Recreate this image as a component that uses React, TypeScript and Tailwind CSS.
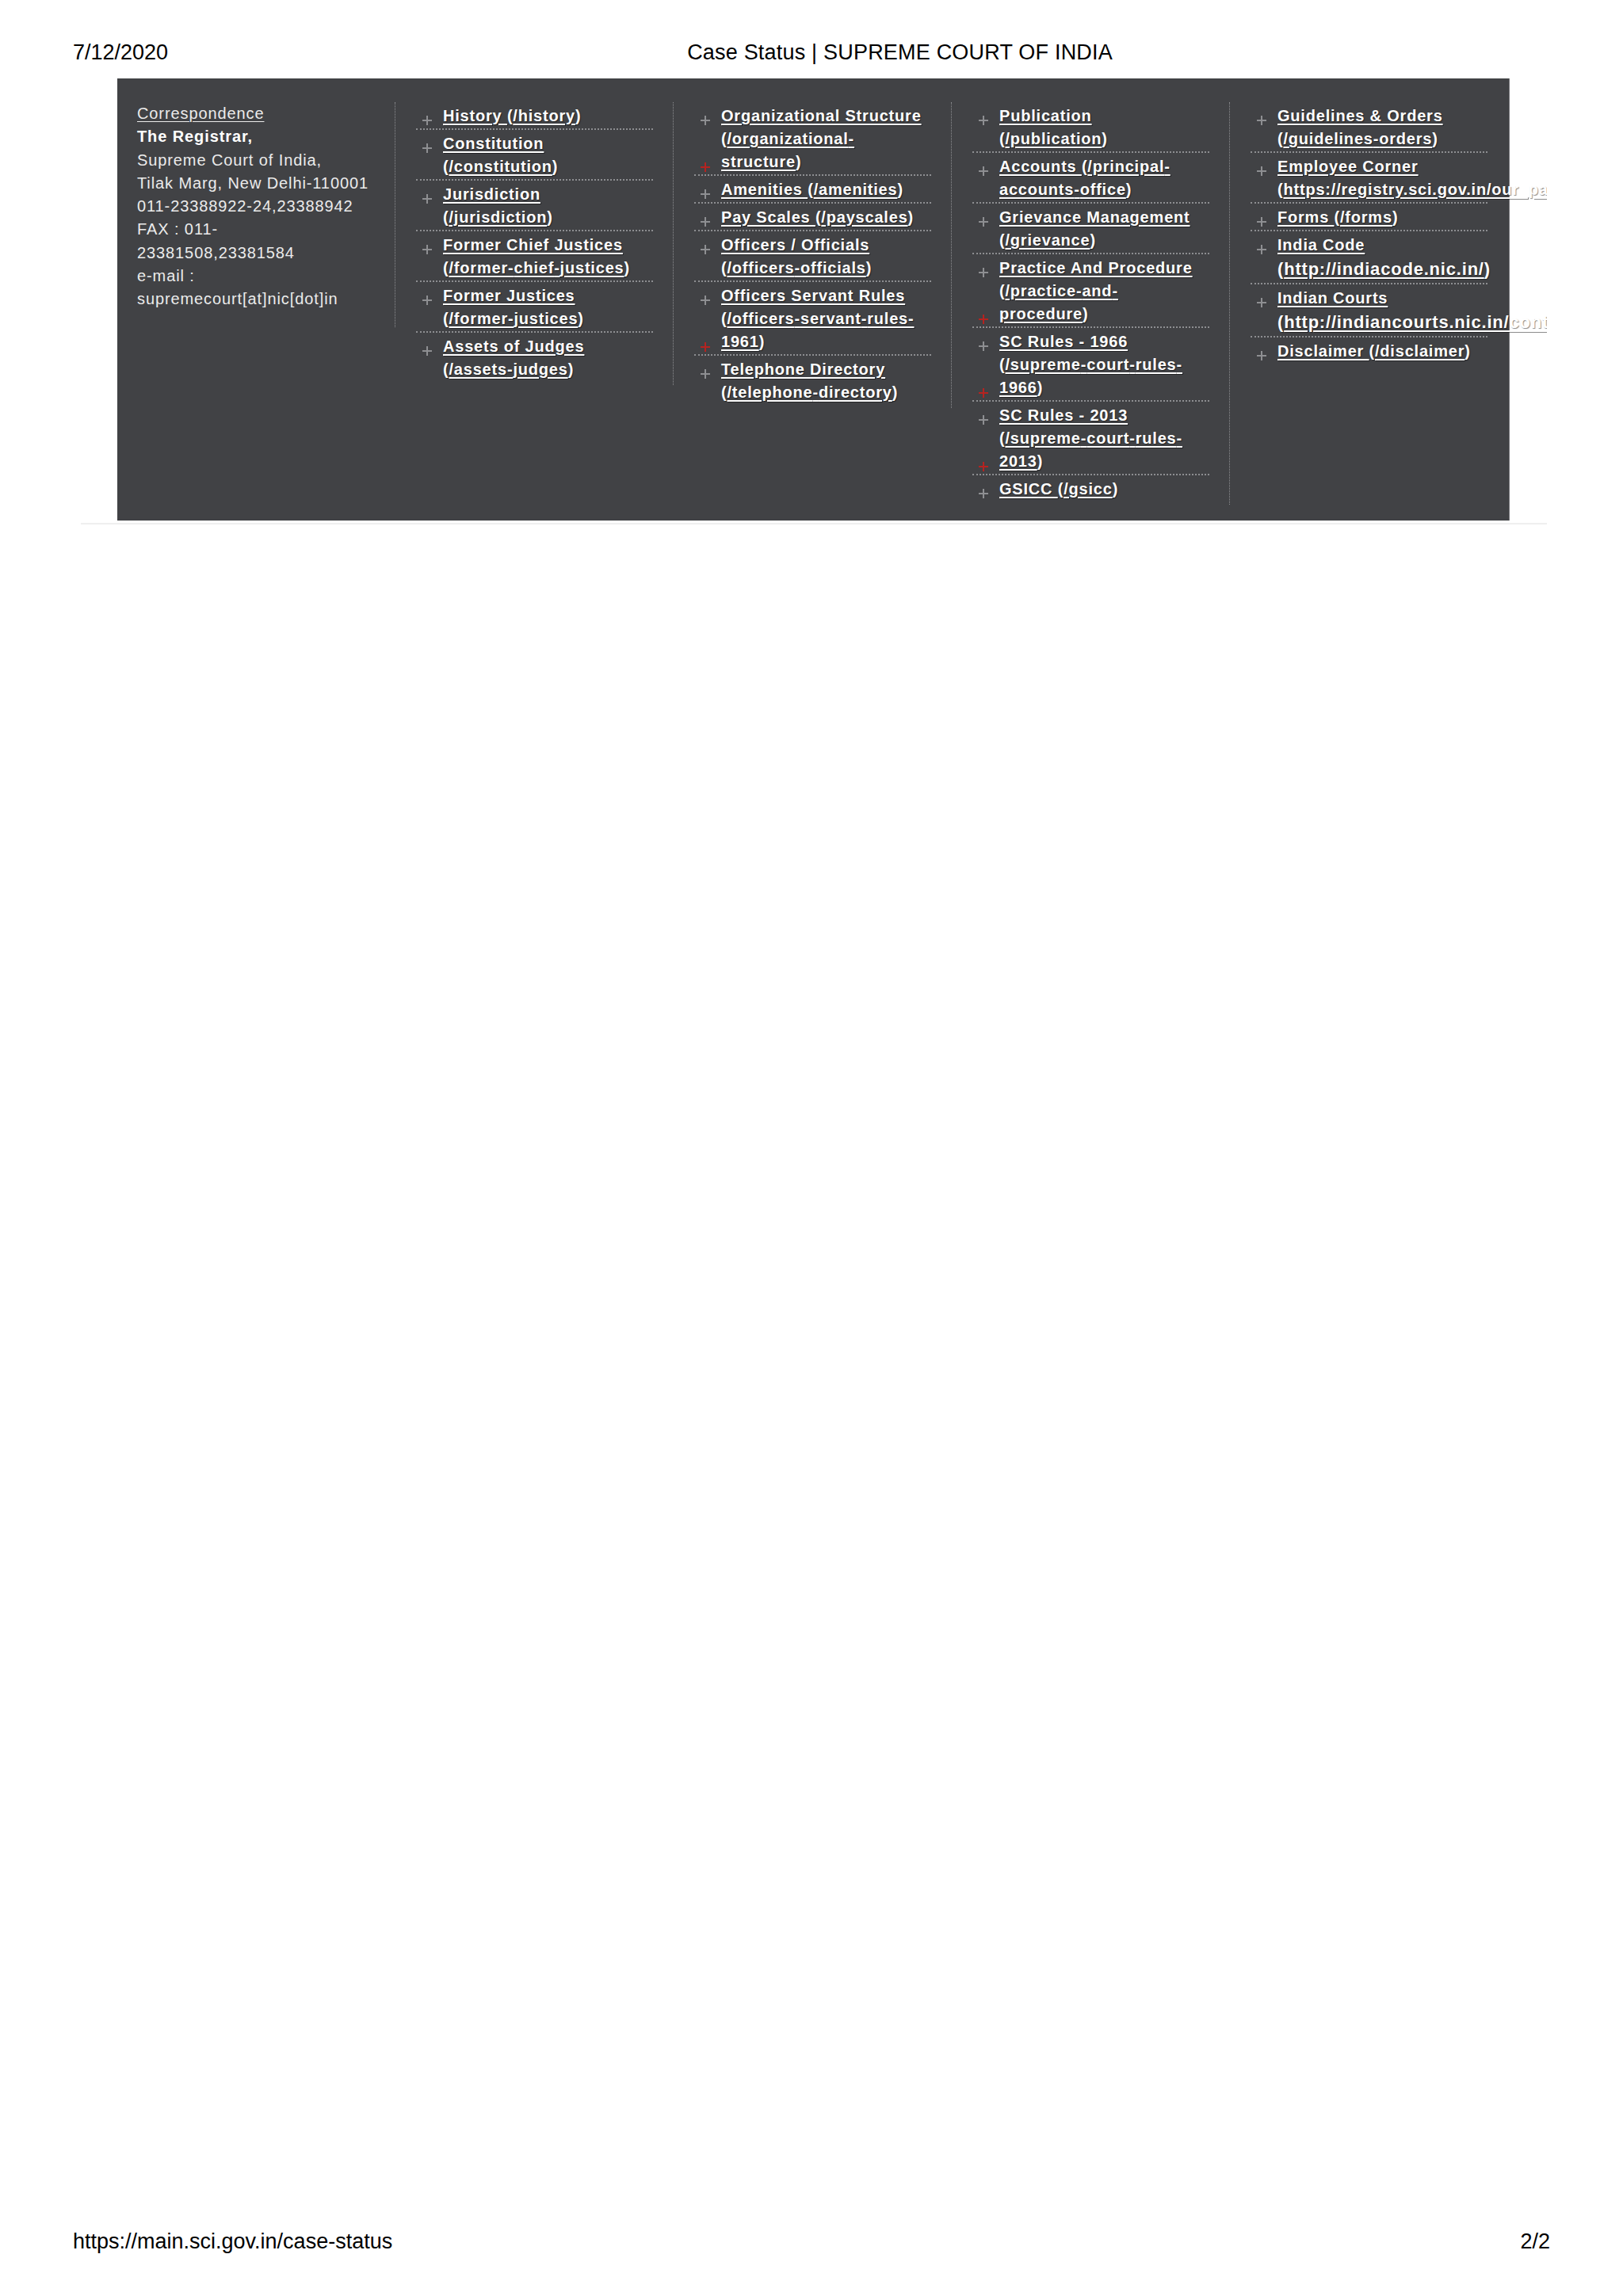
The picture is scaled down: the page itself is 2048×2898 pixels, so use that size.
import React from "react";

type Item = { label: string; href: string; red?: boolean; big?: boolean; nowrap?: boolean };

const col2: Item[] = [
  { label: "History", href: "/history" },
  { label: "Constitution", href: "/constitution" },
  { label: "Jurisdiction", href: "/jurisdiction" },
  { label: "Former Chief Justices", href: "/former-chief-justices" },
  { label: "Former Justices", href: "/former-justices" },
  { label: "Assets of Judges", href: "/assets-judges" },
];

const col3: Item[] = [
  { label: "Organizational Structure", href: "/organizational-structure", red: true },
  { label: "Amenities", href: "/amenities" },
  { label: "Pay Scales", href: "/payscales" },
  { label: "Officers / Officials", href: "/officers-officials" },
  { label: "Officers Servant Rules", href: "/officers-servant-rules-1961", red: true },
  { label: "Telephone Directory", href: "/telephone-directory" },
];

const col4: Item[] = [
  { label: "Publication", href: "/publication" },
  { label: "Accounts", href: "/principal-accounts-office" },
  { label: "Grievance Management", href: "/grievance" },
  { label: "Practice And Procedure", href: "/practice-and-procedure", red: true },
  { label: "SC Rules - 1966", href: "/supreme-court-rules-1966", red: true },
  { label: "SC Rules - 2013", href: "/supreme-court-rules-2013", red: true },
  { label: "GSICC", href: "/gsicc" },
];

const col5: Item[] = [
  { label: "Guidelines & Orders", href: "/guidelines-orders" },
  { label: "Employee Corner", href: "https://registry.sci.gov.in/our_page/employee_corner", nowrap: true },
  { label: "Forms", href: "/forms" },
  { label: "India Code", href: "http://indiacode.nic.in/", big: true, nowrap: true },
  { label: "Indian Courts", href: "http://indiancourts.nic.in/content/", big: true, nowrap: true },
  { label: "Disclaimer", href: "/disclaimer" },
];

function Plus({ red }: { red?: boolean }) {
  const c = red ? "#b52320" : "#8e8f92";
  return (
    <svg width="12" height="12" viewBox="0 0 12 12" className="block">
      <rect x="0" y="5" width="12" height="2" fill={c} />
      <rect x="5" y="0" width="2" height="12" fill={c} />
    </svg>
  );
}

function Href({ text }: { text: string }) {
  const parts = text.split("-");
  return (
    <>
      {parts.map((p, i) => (
        <React.Fragment key={i}>
          {p}
          {i < parts.length - 1 ? (
            <>
              -<wbr />
            </>
          ) : null}
        </React.Fragment>
      ))}
    </>
  );
}

function LinkList({ items }: { items: Item[] }) {
  return (
    <ul className="w-[299px]">
      {items.map((it) => (
        <li
          key={it.label}
          className="relative pl-[34px] pr-[9px] pt-[3px] pb-[1px] border-b-2 border-dotted border-[#8d8e91] last:border-b-0 text-[20px] leading-[29px] font-bold tracking-[0.8px] text-white [text-shadow:1px_1px_1px_rgba(0,0,0,0.45)]"
        >
          <span className="absolute left-[8px] top-[17px]">
            <Plus />
          </span>
          {it.red ? (
            <span className="absolute left-[8px] top-[76px]">
              <Plus red />
            </span>
          ) : null}
          <span className="underline decoration-[1.5px] underline-offset-[3px]">{it.label + " "}</span>
          {it.nowrap ? (
            <span className={it.big ? "whitespace-nowrap text-[22px] leading-[32px]" : "whitespace-nowrap"}>
              (<span className="underline decoration-[1.5px] underline-offset-[3px]">{it.href}</span>)
            </span>
          ) : (
            <>
              (<span className="underline decoration-[1.5px] underline-offset-[3px]">
                <Href text={it.href} />
              </span>)
            </>
          )}
        </li>
      ))}
    </ul>
  );
}

export default function App() {
  return (
    <div className="relative flex h-[2898px] w-[2048px] flex-col bg-white font-['Liberation_Sans',Arial,sans-serif] text-black">
      <div className="flex pl-[92px] pt-[51px] text-[27px] leading-[31px]">
        <span>7/12/2020</span>
        <span className="ml-[655px] tracking-[0.2px]">Case Status | SUPREME COURT OF INDIA</span>
      </div>

      <div className="ml-[102px] mt-[17px] w-[1850px] overflow-hidden border-b-2 border-[#efefef] pb-[3px]">
        <div className="ml-[46px] flex w-[1757px] items-start border-r border-[#75767a] bg-[#414245] pt-[30px] pb-[20px]">
          <div className="w-[351px] shrink-0 border-r border-dotted border-[#8d8e91] pl-[25px] pr-[26px] pb-[21px] text-[20px] leading-[29.25px] tracking-[0.9px] text-[#ebebeb]">
            <div className="underline decoration-1 underline-offset-[3px]">Correspondence</div>
            <div className="font-bold text-white">The Registrar,</div>
            <div>
              Supreme Court of India,
              <br />
              Tilak Marg, New Delhi-110001
              <br />
              011-23388922-24,23388942
              <br />
              FAX : 011-
              <wbr />
              23381508,23381584
              <br />
              e-mail : supremecourt[at]nic[dot]in
            </div>
          </div>
          <div className="w-[351px] shrink-0 border-r border-dotted border-[#8d8e91] pl-[26px] pr-[25px] pb-[4px]">
            <LinkList items={col2} />
          </div>
          <div className="w-[351px] shrink-0 border-r border-dotted border-[#8d8e91] pl-[26px] pr-[25px] pb-[4px]">
            <LinkList items={col3} />
          </div>
          <div className="w-[351px] shrink-0 border-r border-dotted border-[#8d8e91] pl-[26px] pr-[25px] pb-[4px]">
            <LinkList items={col4} />
          </div>
          <div className="w-[351px] shrink-0 pl-[26px] pr-[25px] pb-[4px]">
            <LinkList items={col5} />
          </div>
        </div>
      </div>

      <div className="flex-1" />

      <div className="flex justify-between px-[92px] pb-[53px] text-[27px] leading-[31px]">
        <span>https://main.sci.gov.in/case-status</span>
        <span>2/2</span>
      </div>
    </div>
  );
}
